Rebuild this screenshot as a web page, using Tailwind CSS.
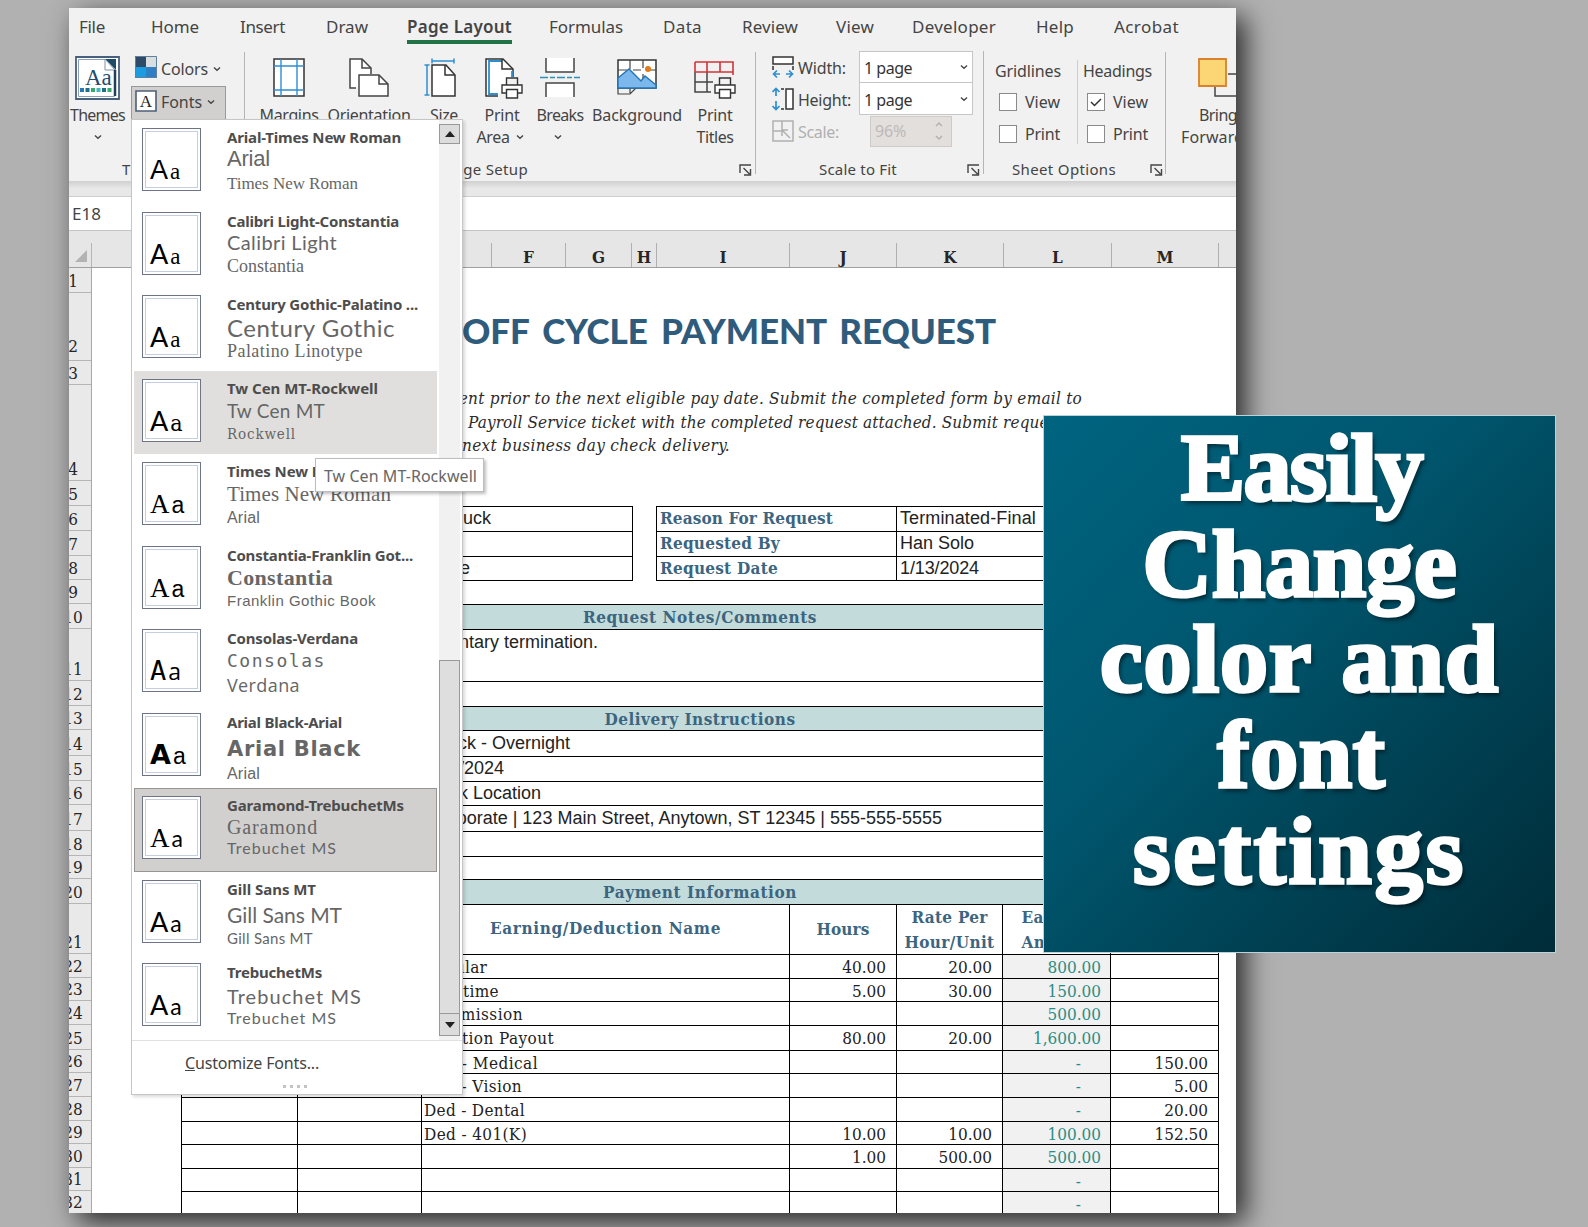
<!DOCTYPE html>
<html lang="en">
  <head>
    <meta charset="UTF-8" />
    <meta name="viewport" content="width=device-width, initial-scale=1.0" />
    <title>Off Cycle Payment Request</title>
    <script src="https://cdn.jsdelivr.net/npm/@tailwindcss/browser@4"></script>
  </head>
  <body class="relative w-[1588px] h-[1227px] overflow-hidden bg-[#b1b1b1] pt-2 pl-[69px] font-['Noto_Sans',sans-serif] text-[#444]">
    <!-- Shared icons -->
    <svg class="hidden">
      <symbol id="chev" viewBox="0 0 10 6"><path d="M1.2 1.2 5 4.6 8.8 1.2" fill="none" stroke="#444" stroke-width="1.7" /></symbol>
      <symbol id="launch" viewBox="0 0 13 12"><path d="M1 9V1h11M4.500 4l6 6M11.500 5v6H5" fill="none" stroke="#444" stroke-width="1.400" /></symbol>
      <symbol id="printer" viewBox="0 0 22 22">
        <path d="M5.500 8V1h11v7" fill="#f1f1f1" stroke="#333" stroke-width="1.400" />
        <path d="M1 8h20v8H1z" fill="#fff" stroke="#333" stroke-width="1.400" />
        <path d="M5.500 12.500h11V21h-11z" fill="#fff" stroke="#333" stroke-width="1.400" />
      </symbol>
    </svg>

    <!-- Excel window -->
    <div class="w-[1167px] h-[1205px] overflow-hidden bg-white shadow-[9px_9px_26px_rgba(0,0,0,0.78)]">
      <!-- Tabs -->
      <div class="flex h-[39px] items-start bg-[#f1f1f1] pl-[10px] pt-[7px] text-[17px] leading-6 whitespace-nowrap">
        <span data-w="26">File</span>
        <span data-w="48" class="ml-[46px]">Home</span>
        <span data-w="45" class="ml-[41px]">Insert</span>
        <span data-w="42" class="ml-[41px]">Draw</span>
        <span class="ml-[39px] h-[29px] w-[105px] border-b-4 border-[#217346] font-semibold"><span data-w="105">Page Layout</span></span>
        <span data-w="74" class="ml-[37px]">Formulas</span>
        <span data-w="39" class="ml-[40px]">Data</span>
        <span data-w="56" class="ml-[40px]">Review</span>
        <span data-w="38" class="ml-[38px]">View</span>
        <span data-w="84" class="ml-[38px]">Developer</span>
        <span data-w="38" class="ml-[40px]">Help</span>
        <span data-w="65" class="ml-[40px]">Acrobat</span>
      </div>

      <!-- Ribbon -->
      <div class="flex h-[134px] bg-[#f1f1f1] text-[16px] leading-[22px] whitespace-nowrap">
        <!-- Themes -->
        <div class="w-[176px] shrink-0 pt-[5px]">
          <div class="flex h-[122px] border-r border-[#b5b5b5]">
            <div class="flex w-[57px] flex-col items-center pt-1">
              <svg class="h-11 w-[45px]" viewBox="0 0 45 44">
                <path d="M1 1h43v42H1z" fill="#fff" stroke="#4a5f7c" stroke-width="1.800" />
                <path d="M3.500 3.500h27l9 10v27h-36z" fill="#fff" stroke="#8aa0bd" />
                <path d="M30 3h11v11z" fill="#1f4a66" />
                <path d="M30 3v11h10z" fill="#fff" stroke="#7f93ad" />
                <path d="M40 14v26" stroke="#1f3f5c" stroke-width="2.500" />
                <text x="10" y="29" font-size="23" font-family="Liberation Serif" fill="#1f4e6e">Aa</text>
                <path d="M5 34h4" stroke="#2e75b6" stroke-width="4" />
                <path d="M10.500 34h4M27 34h4" stroke="#1f6f8b" stroke-width="4" />
                <path d="M16 34h4M32.500 34h4" stroke="#3aa76d" stroke-width="4" />
                <path d="M21.500 34h4" stroke="#43b7c2" stroke-width="4" />
              </svg>
              <span data-w="55" class="mt-1">Themes</span>
              <svg class="mt-2 h-1.5 w-2"><use href="#chev" /></svg>
            </div>
            <div class="pl-[5px]">
              <div class="flex h-[34px] items-center pl-1">
                <svg class="mb-1 size-[22px]" viewBox="0 0 22 22">
                  <path d="M0 0h11v11H0z" fill="#2f4a66" /><path d="M11 0h11v11H11z" fill="#d9dfe0" />
                  <path d="M0 11h11v11H0z" fill="#1b9be0" /><path d="M11 11h11v11H11z" fill="#2f7fc4" />
                  <path d="M.5 .5h21v21H.5z" fill="none" stroke="#5f7f9c" />
                </svg>
                <span data-w="47" class="ml-1">Colors</span>
                <svg class="ml-[5px] h-1.5 w-2"><use href="#chev" /></svg>
              </div>
              <div class="flex h-[34px] w-[95px] items-center border border-[#999] bg-[#d2d0ce] pl-[3px] pb-0.5">
                <svg class="mb-0.5 size-[22px]" viewBox="0 0 22 22">
                  <path d="M1 1h20v20H1z" fill="#fff" stroke="#4f5f78" stroke-width="1.600" />
                  <text x="11" y="17" text-anchor="middle" font-size="17" font-family="Liberation Serif" fill="#222">A</text>
                </svg>
                <span data-w="41" class="ml-1">Fonts</span>
                <svg class="ml-[5px] h-1.5 w-2"><use href="#chev" /></svg>
              </div>
              <div class="mt-[38px] -ml-[9px] text-[15px]">Themes</div>
            </div>
          </div>
        </div>

        <!-- Page Setup -->
        <div class="w-[511px] shrink-0 pt-[5px]">
          <div class="flex h-[122px] flex-col border-r border-[#b5b5b5]">
            <div class="flex h-[106px] shrink-0 pl-3 pt-[5px]">
              <div class="flex w-[64px] flex-col items-center">
                <svg class="h-[42px] w-8" viewBox="0 0 32 42">
                  <path d="M1 2h30v37H1z" fill="#fff" stroke="#333" stroke-width="1.500" />
                  <path d="M8 2v37M24 2v37M1 9h30M1 33h30" stroke="#2e8fd0" stroke-width="1.400" />
                </svg>
                <span data-w="59" class="mt-[5px]">Margins</span>
              </div>
              <div class="ml-1.5 flex w-[84px] flex-col items-center">
                <svg class="h-[42px] w-10" viewBox="0 0 40 42">
                  <path d="M7 31H1V2h12l9 9v6" fill="#fff" stroke="#444" stroke-width="1.500" />
                  <path d="M13 2v9h9" fill="none" stroke="#444" stroke-width="1.500" />
                  <path d="M10 18h20l9 9v12H10z" fill="#fff" stroke="#444" stroke-width="1.500" />
                  <path d="M30 18v9h9" fill="none" stroke="#444" stroke-width="1.500" />
                </svg>
                <span data-w="83" class="mt-[5px]">Orientation</span>
              </div>
              <div class="-ml-0.5 flex w-[62px] flex-col items-center">
                <svg class="h-[42px] w-8" viewBox="0 0 32 42">
                  <path d="M8 8h14l9 10v21H8z" fill="#fff" stroke="#333" stroke-width="1.500" />
                  <path d="M21 8v10h10" fill="none" stroke="#333" stroke-width="1.500" />
                  <path d="M8 4h22M8 1.500v5M30 1.500v5M3 8v30M.5 8h5M.5 38h5" stroke="#2e8fd0" stroke-width="1.500" />
                </svg>
                <span data-w="28" class="mt-[5px] ml-2">Size</span>
              </div>
              <div class="ml-1.5 flex w-[50px] flex-col items-center">
                <svg class="ml-1 h-[42px] w-10" viewBox="0 0 40 42">
                  <path d="M14 39H2V2h17l10 10v8" fill="#fff" stroke="#333" stroke-width="1.500" />
                  <path d="M14 37H5V4h13M28 14v6" fill="none" stroke="#2e8fd0" stroke-width="1.800" />
                  <path d="M18 2v10h11" fill="none" stroke="#333" stroke-width="1.500" />
                  <use href="#printer" x="17" y="20" width="22" height="22" />
                </svg>
                <span data-w="35" class="mt-[5px]">Print</span>
                <span class="-ml-1 flex items-center gap-1.5"><span data-w="33">Area</span><svg class="h-1.5 w-2"><use href="#chev" /></svg></span>
              </div>
              <div class="ml-[3px] flex w-[60px] flex-col items-center">
                <svg class="h-[42px] w-10" viewBox="0 0 40 42">
                  <path d="M6 1v14h28V1M6 40V26h28v14" fill="#fff" stroke="#444" stroke-width="1.500" />
                  <path d="M0 20.500h8M10 20.500h5M17 20.500h8M27 20.500h5M34 20.500h6" stroke="#2e8fb8" stroke-width="1.600" />
                </svg>
                <span data-w="47" class="mt-[5px]">Breaks</span>
                <svg class="mt-2 mr-1 h-1.5 w-2"><use href="#chev" /></svg>
              </div>
              <div class="ml-px flex w-[92px] flex-col items-center">
                <svg class="h-[42px] w-10" viewBox="0 0 40 42">
                  <path d="M1 3h38v28H1z" fill="#fff" stroke="#333" stroke-width="1.500" />
                  <path d="M1 31v6h12l6-6M13 3v9M26 3v8M1 13h9M16 13h8M33 13h6M26 17v6M13 31v5" fill="none" stroke="#444" stroke-width="1.200" />
                  <path d="M1 31V21l11-9 12 12 4-5 11 9v3z" fill="#7cb8ec" stroke="#2577b8" stroke-width="1.500" />
                  <circle cx="31" cy="12" r="3" fill="#e07b1a" />
                </svg>
                <span data-w="90" class="mt-[5px]">Background</span>
              </div>
              <div class="ml-[7px] flex w-[50px] flex-col items-center">
                <svg class="h-[42px] w-[42px]" viewBox="0 0 42 42">
                  <path d="M1 15v20h16M1 25h18M13 15v20" fill="none" stroke="#444" stroke-width="1.500" />
                  <path d="M1 5h38v13M1 15h38M1 5v10M13 5v10M26 5v10" fill="none" stroke="#d13438" stroke-width="1.600" />
                  <use href="#printer" x="20" y="20" width="22" height="22" />
                </svg>
                <span data-w="35" class="mt-[5px]">Print</span>
                <span data-w="37">Titles</span>
              </div>
            </div>
            <div class="flex items-center pl-[200px] text-[15px]">
              <span data-w="83">Page Setup</span>
              <svg class="mt-px ml-[211px] h-3 w-[13px] shrink-0"><use href="#launch" /></svg>
            </div>
          </div>
        </div>

        <!-- Scale to Fit -->
        <div class="w-[228px] shrink-0 pt-[4px]">
          <div class="h-[123px] border-r border-[#b5b5b5]">
            <div class="flex h-8 items-center pl-4">
              <svg class="h-6 w-[22px]" viewBox="0 0 22 24">
                <path d="M1 2h20v7H1z" fill="#fff" stroke="#333" stroke-width="1.500" /><path d="M1 11v4M21 11v4" stroke="#333" stroke-width="1.500" />
                <path d="M1 19h7M14 19h7M5 15.500 1.500 19 5 22.500M17 15.500l3.500 3.500-3.500 3.500" fill="none" stroke="#2e8fd0" stroke-width="1.700" />
              </svg>
              <span data-w="48" class="ml-1 pt-0.5">Width:</span>
              <div class="ml-[13px] flex h-8 w-[114px] items-center justify-between border border-[#c6c6c6] bg-white pl-1 pr-1 text-[#333]">
                <span data-w="48" class="pt-0.5">1 page</span><svg class="h-1.5 w-2"><use href="#chev" /></svg>
              </div>
            </div>
            <div class="flex h-8 items-center pl-4">
              <svg class="h-6 w-[22px]" viewBox="0 0 22 24">
                <path d="M14 2h7v20h-7z" fill="#fff" stroke="#333" stroke-width="1.500" /><path d="M12 2H9M12 22H9" stroke="#333" stroke-width="1.500" />
                <path d="M4 2v7M4 14v8M.500 5 4 1.500 7.500 5M.500 19 4 22.500 7.500 19" fill="none" stroke="#2e8fd0" stroke-width="1.700" />
              </svg>
              <span data-w="53" class="ml-1 pt-0.5">Height:</span>
              <div class="ml-2 flex h-8 w-[114px] items-center justify-between border border-[#c6c6c6] border-t-0 bg-white pl-1 pr-1 text-[#333]">
                <span data-w="48" class="pt-0.5">1 page</span><svg class="h-1.5 w-2"><use href="#chev" /></svg>
              </div>
            </div>
            <div class="flex h-8 items-center pl-4 text-[#b0b0b0]">
              <svg class="size-[22px]" viewBox="0 0 22 22">
                <path d="M1 1h20v20H1zM1 11h9V1M10 10l8 8M10 16v-6h6" fill="none" stroke="#b0b0b0" stroke-width="1.500" />
              </svg>
              <span data-w="41" class="ml-1 pt-0.5">Scale:</span>
              <div class="ml-[31px] flex h-[31px] w-[82px] items-center justify-between border border-[#cfcac8] bg-[#e3dfdd] pl-1 pr-2 text-[#bdb9b7]">
                <span data-w="31">96%</span>
                <svg class="h-5 w-2" viewBox="0 0 8 20"><path d="M1 5l3-3 3 3M1 15l3 3 3-3" fill="none" stroke="#b5b1af" stroke-width="1.500" /></svg>
              </div>
            </div>
            <div class="mt-[11px] flex items-center pl-[63px] text-[15px]">
              <span data-w="78">Scale to Fit</span>
              <svg class="mt-px ml-[70px] h-3 w-[13px] shrink-0"><use href="#launch" /></svg>
            </div>
          </div>
        </div>

        <!-- Sheet Options -->
        <div class="w-[182px] shrink-0 pt-[5px]">
          <div class="h-[122px] border-r border-[#b5b5b5]">
            <div class="flex h-[106px] pl-[11px] pt-2">
              <div class="w-[83px]">
                <div class="h-[28px]"><span data-w="66">Gridlines</span></div>
                <div class="flex h-8 items-center gap-2 pb-1 pl-1"><i class="size-[18px] border border-[#8a8a8a] bg-white"></i><span data-w="35">View</span></div>
                <div class="flex h-8 items-center gap-2 pb-1 pl-1"><i class="size-[18px] border border-[#8a8a8a] bg-white"></i><span data-w="35">Print</span></div>
              </div>
              <div class="-ml-px h-[84px] border-l border-[#cdcdcd] pl-[5px]">
                <div class="h-[28px]"><span data-w="69">Headings</span></div>
                <div class="flex h-8 items-center gap-2 pb-1 pl-1">
                  <svg class="size-[18px] border border-[#8a8a8a] bg-white" viewBox="0 0 16 16"><path d="M3 8l3.500 3.500L13 5" fill="none" stroke="#333" stroke-width="1.500" /></svg>
                  <span data-w="35">View</span>
                </div>
                <div class="flex h-8 items-center gap-2 pb-1 pl-1"><i class="size-[18px] border border-[#8a8a8a] bg-white"></i><span data-w="35">Print</span></div>
              </div>
            </div>
            <div class="flex items-center pl-7 text-[15px]">
              <span data-w="104">Sheet Options</span>
              <svg class="mt-px ml-[34px] h-3 w-[13px] shrink-0"><use href="#launch" /></svg>
            </div>
          </div>
        </div>

        <!-- Arrange -->
        <div class="w-[70px] shrink-0 overflow-hidden pt-2.5 pl-[15px]">
          <svg class="ml-[17px] h-[42px] w-12" viewBox="0 0 48 42">
            <path d="M1 2h27v27H1z" fill="#fcd575" stroke="#d9822b" stroke-width="1.800" />
            <path d="M30 17h18M17 30v9h31" fill="none" stroke="#444" stroke-width="1.500" />
          </svg>
          <div class="mt-[5px] ml-[18px]"><span data-w="38">Bring</span></div>
          <div><span data-w="63">Forward</span></div>
        </div>
      </div>
      <div class="h-4 border-b border-[#cfcfcf] bg-linear-to-b from-[#d0d0d0] to-[#e8e8e8] to-50%"></div>

      <!-- Name box -->
      <div class="flex h-[34px] items-center border-b border-[#c4c4c4] pl-[3px] pt-px text-[17px]"><span data-w="29">E18</span></div>

      <!-- Column letters -->
      <div class="flex h-[37px] items-end border-b border-[#a0a0a0] bg-[#e6e6e6] text-center font-['DejaVu_Serif_Condensed','DejaVu_Serif',serif] text-[17px] leading-[29px] font-bold text-[#262626]">
        <div class="flex h-6 w-[23px] items-start justify-end border-r border-[#b5b5b5] pt-[7px] pr-1">
          <svg class="size-3" viewBox="0 0 12 12"><path d="M12 0v12H0z" fill="#b3b3b3" /></svg>
        </div>
        <div class="h-6 w-[400px] border-r border-[#b0b0b0]"></div>
        <div class="h-6 w-[74px] border-r border-[#b0b0b0]">F</div>
        <div class="h-6 w-[66px] border-r border-[#b0b0b0]">G</div>
        <div class="h-6 w-[25px] border-r border-[#b0b0b0]">H</div>
        <div class="h-6 w-[133px] border-r border-[#b0b0b0]">I</div>
        <div class="h-6 w-[107px] border-r border-[#b0b0b0]">J</div>
        <div class="h-6 w-[107px] border-r border-[#b0b0b0]">K</div>
        <div class="h-6 w-[108px] border-r border-[#b0b0b0]">L</div>
        <div class="h-6 w-[107px] border-r border-[#b0b0b0]">M</div>
      </div>

      <!-- Sheet -->
      <div class="flex whitespace-nowrap">
        <div id="rowNumbers" class="w-[23px] shrink-0 overflow-hidden border-r border-[#a8a8a8] bg-[#e9e9e9] font-['DejaVu_Serif_Condensed','DejaVu_Serif',serif] text-[17px] text-[#262626]"></div>
        <div class="w-[1144px] shrink-0 pl-[89px] font-['Liberation_Sans',sans-serif] text-[18px] text-[#222]">
          <div class="mt-[25px] flex h-[68px] items-center pt-1.5 pl-[281px] font-['Lato',sans-serif] text-[35px] font-black text-[#2f5c7c] [word-spacing:5px]">
            <span data-w="534">OFF CYCLE PAYMENT REQUEST</span>
          </div>
          <div class="mt-[26px] h-[119px] pl-[269px] font-['DejaVu_Serif_Condensed','DejaVu_Serif',serif] text-[17px] leading-[23.500px] text-[#2c2c2c] italic">
            <div class="-ml-1.5"><span data-w="638">ment prior to the next eligible pay date. Submit the completed form by email to</span></div>
            <div class="pl-[18px]"><span data-w="595">Payroll Service ticket with the completed request attached. Submit request</span></div>
            <div class="pl-[12px]"><span data-w="268">next business day check delivery.</span></div>
          </div>

          <!-- Employee and request boxes -->
          <div class="flex h-[75px] gap-[23px]">
            <div class="w-[452px] border border-black leading-[23px]">
              <div class="h-[25px] border-b border-black"><div class="w-[309px] text-right">Donald Duck</div></div>
              <div class="h-[25px] border-b border-black"></div>
              <div class="h-[23px]"><div class="w-[288px] text-right">Employee</div></div>
            </div>
            <div class="w-[562px] border border-black leading-[23px]">
              <div class="flex h-[25px] border-b border-black">
                <div class="w-[240px] border-r border-black pl-[3px] font-['DejaVu_Serif_Condensed','DejaVu_Serif',serif] text-[17px] font-bold text-[#3b6580]"><span data-w="173">Reason For Request</span></div>
                <span data-w="136" class="pl-[3px]">Terminated-Final</span>
              </div>
              <div class="flex h-[25px] border-b border-black">
                <div class="w-[240px] border-r border-black pl-[3px] font-['DejaVu_Serif_Condensed','DejaVu_Serif',serif] text-[17px] font-bold text-[#3b6580]"><span data-w="120">Requested By</span></div>
                <span data-w="74" class="pl-[3px]">Han Solo</span>
              </div>
              <div class="flex h-[24px]">
                <div class="w-[240px] border-r border-black pl-[3px] font-['DejaVu_Serif_Condensed','DejaVu_Serif',serif] text-[17px] font-bold text-[#3b6580]"><span data-w="118">Request Date</span></div>
                <span data-w="79" class="pl-[3px]">1/13/2024</span>
              </div>
            </div>
          </div>

          <!-- Notes, delivery and payment sections -->
          <div class="mt-[23px] w-[1038px] border-x border-t border-black leading-6">
            <div class="h-[25px] border-b border-black bg-[#c3dbda] text-center font-['DejaVu_Serif_Condensed','DejaVu_Serif',serif] text-[17px] font-bold text-[#3b6580]"><span data-w="234">Request Notes/Comments</span></div>
            <div class="h-[52px] border-b border-black"><div class="w-[416px] text-right">Voluntary termination.</div></div>
            <div class="h-[25px] border-b border-black"></div>
            <div class="h-[24px] border-b border-black bg-[#c3dbda] text-center font-['DejaVu_Serif_Condensed','DejaVu_Serif',serif] text-[17px] font-bold text-[#3b6580]"><span data-w="191">Delivery Instructions</span></div>
            <div class="h-[26px] border-b border-black"><div class="w-[388px] text-right">Check - Overnight</div></div>
            <div class="h-[25px] border-b border-black leading-[23px]"><div class="w-[322px] text-right">1/15/2024</div></div>
            <div class="h-[24px] border-b border-black leading-[23px]"><div class="w-[359px] text-right">Work Location</div></div>
            <div class="h-[26px] border-b border-black"><div class="w-[760px] text-right">Corporate | 123 Main Street, Anytown, ST 12345 | 555-555-5555</div></div>
            <div class="h-[25px] border-b border-black"></div>
            <div class="h-[23px] border-b border-black"></div>
            <div class="h-[25px] border-b border-black bg-[#c3dbda] text-center font-['DejaVu_Serif_Condensed','DejaVu_Serif',serif] text-[17px] font-bold text-[#3b6580]"><span data-w="194">Payment Information</span></div>
            <div class="flex h-[50px] border-b border-black text-center font-['DejaVu_Serif_Condensed','DejaVu_Serif',serif] text-[17px] leading-[25px] font-bold text-[#3b6580]">
              <div class="w-[116px] border-r border-black"></div>
              <div class="w-[124px] border-r border-black"></div>
              <div class="w-[368px] border-r border-black pt-[11px]"><span data-w="231">Earning/Deduction Name</span></div>
              <div class="w-[107px] border-r border-black pt-3"><span data-w="53">Hours</span></div>
              <div class="w-[106px] border-r border-black"><span data-w="76">Rate Per</span><br /><span data-w="90">Hour/Unit</span></div>
              <div class="w-[108px] border-r border-black"><span data-w="70">Earning</span><br /><span data-w="70">Amount</span></div>
              <div class="w-[107px]"></div>
            </div>
          </div>
          <div id="payRows" class="w-[1038px] border-x border-black font-['DejaVu_Serif_Condensed','DejaVu_Serif',serif] text-[17px] leading-[24px]"></div>
        </div>
      </div>
    </div>

    <!-- Fonts dropdown -->
    <div class="absolute top-[119px] left-[131px] flex h-[976px] w-[332px] flex-col border border-[#c6c6c6] bg-white shadow-[2px_2px_3px_rgba(0,0,0,0.15)]">
      <div class="flex h-[921px] border-b border-[#e1e1e1]">
        <div id="fontList" class="w-[305px] pl-0.5 whitespace-nowrap"></div>
        <!-- Scrollbar -->
        <div class="ml-[2px] flex w-[21px] flex-col bg-[#f1f1f1] pt-1">
          <div class="flex h-5 items-center justify-center border border-[#999] bg-[#dcdcdc]"><svg class="h-1.5 w-2.5" viewBox="0 0 10 6"><path d="M0 6 5 0l5 6z" fill="#222" /></svg></div>
          <div class="mt-[516px] h-[354px] border border-[#999] bg-[#dedede]"></div>
          <div class="flex h-[22px] items-center justify-center border border-t-0 border-[#999] bg-[#dcdcdc]"><svg class="h-1.5 w-2.5" viewBox="0 0 10 6"><path d="M0 0l5 6 5-6z" fill="#222" /></svg></div>
        </div>
      </div>
      <div class="pt-[10px] pl-[53px] text-[16px] leading-6"><span data-w="134"><u>C</u>ustomize Fonts...</span></div>
      <div class="mt-2.5 flex justify-center gap-1 pr-1">
        <i class="size-[3px] bg-[#c4c4c4]"></i><i class="size-[3px] bg-[#c4c4c4]"></i><i class="size-[3px] bg-[#c4c4c4]"></i><i class="size-[3px] bg-[#c4c4c4]"></i>
      </div>
    </div>

    <!-- Tooltip -->
    <div class="absolute top-[458px] left-[315px] flex h-[34px] w-[169px] items-center border border-[#bdbdbd] bg-white pt-0.5 pl-2 text-[16px] whitespace-nowrap text-[#666] shadow-[2px_2px_3px_rgba(0,0,0,0.25)]">
      <span data-w="153">Tw Cen MT-Rockwell</span>
    </div>

    <!-- Callout -->
    <div class="absolute top-[415px] left-[1043px] flex h-[538px] w-[513px] flex-col items-center border border-[#b9d3da] bg-linear-to-br from-[#006480] via-[#00566e] via-40% to-[#002c38] pt-[4px] font-['Liberation_Serif',serif] text-[96px] leading-[95.700px] font-bold whitespace-nowrap text-white [-webkit-text-stroke:3.500px_white] [text-shadow:3px_4px_4px_rgba(0,0,0,0.55)] [word-spacing:6px]">
      <span data-w="241" class="ml-1">Easily</span>
      <span data-w="314">Change</span>
      <span data-w="399">color and</span>
      <span data-w="168" class="ml-1">font</span>
      <span data-w="333">settings</span>
    </div>

    <script>
      // Row heights of the sheet, rows 1 to 32
      const rowHeights = [25, 68, 24, 96, 25, 25, 25, 24, 24, 25, 52, 25, 24, 26, 25, 24, 26, 25, 23, 25, 50, 24, 23, 24, 25, 23, 24, 24, 23, 24, 23, 23];

      document.getElementById("rowNumbers").innerHTML = rowHeights
        .map(
          (h, i) =>
            `<div class="-ml-3.5 flex w-9 items-end justify-center border-b border-[#b5b5b5] leading-[21px] ${i === 1 ? "pb-[3px]" : ""}" style="height:${h}px">${i + 1}</div>`
        )
        .join("");

      // name, width, hours, rate, earning, deduction
      const payments = [
        ["Regular", 63, "40.00", "20.00", "800.00", ""],
        ["Overtime", 75, "5.00", "30.00", "150.00", ""],
        ["Commission", 99, "", "", "500.00", ""],
        ["Vacation Payout", 130, "80.00", "20.00", "1,600.00", ""],
        ["Ded - Medical", 114, "", "", "-", "150.00"],
        ["Ded - Vision", 98, "", "", "-", "5.00"],
        ["Ded - Dental", 101, "", "", "-", "20.00"],
        ["Ded - 401(K)", 103, "10.00", "10.00", "100.00", "152.50"],
        ["", 0, "1.00", "500.00", "500.00", ""],
        ["", 0, "", "", "-", ""],
        ["", 0, "", "", "-", ""],
      ];

      document.getElementById("payRows").innerHTML = payments
        .map(
          ([name, w, hours, rate, earn, ded], i) => `
          <div class="flex border-b border-black text-right" style="height:${rowHeights[21 + i]}px">
            <div class="w-[116px] border-r border-black"></div>
            <div class="w-[124px] border-r border-black"></div>
            <div class="w-[368px] border-r border-black pl-0.5 text-left"><span data-w="${w}">${name}</span></div>
            <div class="w-[107px] border-r border-black pr-2.5">${hours}</div>
            <div class="w-[106px] border-r border-black pr-2.5">${rate}</div>
            <div class="w-[108px] border-r border-black bg-[#f1f1f1] text-[#2a8c84] ${earn === "-" ? "pr-[29px]" : "pr-[9px]"}">${earn}</div>
            <div class="w-[107px] pr-2.5">${ded}</div>
          </div>`
        )
        .join("");

      const arial = "font-['Liberation_Sans',sans-serif]";
      const black = "font-['DejaVu_Sans',sans-serif] font-bold";
      const times = "font-['Liberation_Serif',serif]";
      const mono = "font-['DejaVu_Sans_Mono',monospace]";
      const slab = "font-['DejaVu_Serif_Condensed','DejaVu_Serif',serif]";
      const lato = "font-['Lato',sans-serif]";
      const sans = "font-['Open_Sans',sans-serif]";

      // title, major font, minor font: [text, width, font, size, line height]
      const fonts = [
        [["Arial-Times New Roman", 174], ["Arial", 43, arial, 22, 24], ["Times New Roman", 131, times, 17, 25]],
        [["Calibri Light-Constantia", 172], ["Calibri Light", 110, lato, 20, 23], ["Constantia", 77, times, 18, 25]],
        [["Century Gothic-Palatino ...", 191], ["Century Gothic", 168, lato, 24, 27], ["Palatino Linotype", 136, times, 18, 21]],
        [["Tw Cen MT-Rockwell", 151], ["Tw Cen MT", 98, lato, 19, 26], ["Rockwell", 69, slab, 15, 21]],
        [["Times New Roman-Arial", 176], ["Times New Roman", 164, times, 21, 26], ["Arial", 33, arial, 16, 22]],
        [["Constantia-Franklin Got...", 186], ["Constantia", 106, times + " font-bold", 22, 26], ["Franklin Gothic Book", 149, arial, 15, 19]],
        [["Consolas-Verdana", 131], ["Consolas", 99, mono, 18, 25], ["Verdana", 73, sans, 18, 25]],
        [["Arial Black-Arial", 115], ["Arial Black", 134, black, 21, 34], ["Arial", 33, arial, 16, 16]],
        [["Garamond-TrebuchetMs", 177], ["Garamond", 91, times, 20, 24], ["Trebuchet MS", 110, lato, 16, 17]],
        [["Gill Sans MT", 89], ["Gill Sans MT", 115, lato, 21, 32], ["Gill Sans MT", 86, lato, 15, 14]],
        [["TrebuchetMs", 95], ["Trebuchet MS", 135, lato, 20, 29], ["Trebuchet MS", 110, lato, 16, 14]],
      ];

      document.getElementById("fontList").innerHTML = fonts
        .map(([title, major, minor], i) => {
          const state = i === 3 ? "bg-[#e1dfdd] border-transparent" : i === 8 ? "bg-[#d2d0ce] border-[#979593]" : "border-transparent";
          const capFont = i === 5 ? times : major[2];
          return `
          <div class="flex h-[83.500px] border pt-[7px] pl-[7px] ${state}">
            <div class="flex h-[63px] w-[59px] shrink-0 items-baseline gap-0.5 border-[1.500px] border-[#6c7486] bg-white pt-[23px] pl-[7px] text-black shadow-[inset_0_0_0_2px_#fff,inset_0_0_0_3px_#c3cfe0]">
              <span class="${capFont} text-[27px] leading-9">A</span><span class="${minor[2]} text-[23px] leading-9">a</span>
            </div>
            <div class="pl-[26px] text-[#666]">
              <div class="text-[15px] leading-[19px] font-bold text-[#4d4d4d]"><span data-w="${title[1]}">${title[0]}</span></div>
              <div class="${major[2]}" style="font-size:${major[3]}px;line-height:${major[4]}px"><span data-w="${major[1]}">${major[0]}</span></div>
              <div class="${minor[2]}" style="font-size:${minor[3]}px;line-height:${minor[4]}px"><span data-w="${minor[1]}">${minor[0]}</span></div>
            </div>
          </div>`;
        })
        .join("");

      // Space the letters so every label takes its set width
      function fitLabels() {
        document.querySelectorAll("[data-w]").forEach((el) => {
          if (!el.textContent) return;
          el.style.letterSpacing = "0px";
          const range = document.createRange();
          range.selectNodeContents(el);
          const gap = (el.dataset.w - range.getBoundingClientRect().width) / el.textContent.length;
          el.style.letterSpacing = gap + "px";
        });
      }
      fitLabels();
      window.addEventListener("load", fitLabels);
      document.fonts.ready.then(fitLabels);
    </script>
  </body>
</html>
